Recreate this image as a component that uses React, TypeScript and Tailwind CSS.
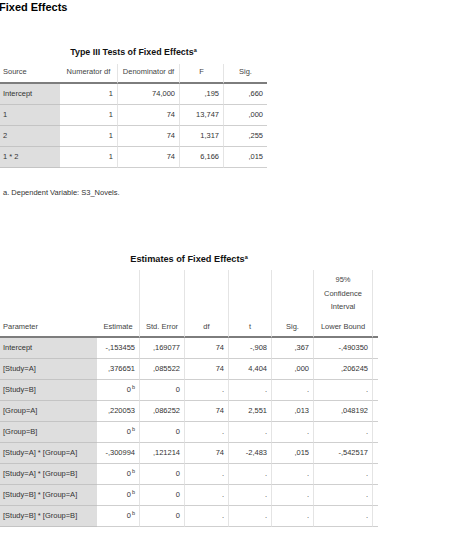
import React from "react"

const font = { fontFamily: '"Liberation Sans", Arial, sans-serif' }

type Cell = { v: string; sup?: string }

const testsCols = [60, 58, 62, 44, 43]
const testsHead = ["Source", "Numerator df", "Denominator df", "F", "Sig."]
const testsRows: string[][] = [
  ["Intercept", "1", "74,000", ",195", ",660"],
  ["1", "1", "74", "13,747", ",000"],
  ["2", "1", "74", "1,317", ",255"],
  ["1 * 2", "1", "74", "6,166", ",015"],
]

const estCols = [97, 43, 45, 44, 43, 42, 59, 5]
const estHead = ["Parameter", "Estimate", "Std. Error", "df", "t", "Sig."]
const estRows: Cell[][] = [
  [{ v: "Intercept" }, { v: "-,153455" }, { v: ",169077" }, { v: "74" }, { v: "-,908" }, { v: ",367" }, { v: "-,490350" }],
  [{ v: "[Study=A]" }, { v: ",376651" }, { v: ",085522" }, { v: "74" }, { v: "4,404" }, { v: ",000" }, { v: ",206245" }],
  [{ v: "[Study=B]" }, { v: "0", sup: "b" }, { v: "0" }, { v: "." }, { v: "." }, { v: "." }, { v: "." }],
  [{ v: "[Group=A]" }, { v: ",220053" }, { v: ",086252" }, { v: "74" }, { v: "2,551" }, { v: ",013" }, { v: ",048192" }],
  [{ v: "[Group=B]" }, { v: "0", sup: "b" }, { v: "0" }, { v: "." }, { v: "." }, { v: "." }, { v: "." }],
  [{ v: "[Study=A] * [Group=A]" }, { v: "-,300994" }, { v: ",121214" }, { v: "74" }, { v: "-2,483" }, { v: ",015" }, { v: "-,542517" }],
  [{ v: "[Study=A] * [Group=B]" }, { v: "0", sup: "b" }, { v: "0" }, { v: "." }, { v: "." }, { v: "." }, { v: "." }],
  [{ v: "[Study=B] * [Group=A]" }, { v: "0", sup: "b" }, { v: "0" }, { v: "." }, { v: "." }, { v: "." }, { v: "." }],
  [{ v: "[Study=B] * [Group=B]" }, { v: "0", sup: "b" }, { v: "0" }, { v: "." }, { v: "." }, { v: "." }, { v: "." }],
]

function TestsTable() {
  return (
    <div className="w-[267px]">
      <div className="h-[12px] text-center text-[8.9px] font-bold leading-[12px] text-[#111]">
        Type III Tests of Fixed Effects<sup className="text-[5.5px]">a</sup>
      </div>
      <div className="mt-[6px] flex">
        {testsHead.map((h, i) => (
          <div
            key={h}
            style={{ width: testsCols[i] }}
            className={`flex h-[20px] items-end border-b-2 border-[#7d7d7d] pb-[5px] leading-[10px] text-[#444] ${
              i === 0 ? "justify-start pl-[3px]" : "justify-center"
            } ${i > 0 && i < 4 ? "border-r border-r-[#e4e4e4]" : ""}`}
          >
            {h}
          </div>
        ))}
      </div>
      {testsRows.map((r, ri) => (
        <div key={ri} className="flex">
          {r.map((c, i) => (
            <div
              key={i}
              style={{ width: testsCols[i] }}
              className={`flex h-[21px] items-center border-b ${
                i === 0 ? "border-[#c4c4c4] bg-[#dedede] pl-[3px]" : "justify-end border-[#cfcfcf] pr-[4px]"
              } ${i > 0 && i < 4 ? "border-r border-r-[#e4e4e4]" : ""}`}
            >
              {c}
            </div>
          ))}
        </div>
      ))}
    </div>
  )
}

function EstimatesTable() {
  return (
    <div className="w-[378px]">
      <div className="h-[12px] text-center text-[9.2px] font-bold leading-[12px] text-[#111]">
        Estimates of Fixed Effects<sup className="text-[5.5px]">a</sup>
      </div>
      <div className="mt-[5px] flex text-[#444]">
        {estHead.map((h, i) => (
          <div
            key={h}
            style={{ width: estCols[i] }}
            className={`flex h-[68px] items-end border-b-2 border-[#7d7d7d] pb-[4px] leading-[10px] ${
              i === 0 ? "justify-start pl-[3px]" : "justify-center border-r border-r-[#e4e4e4]"
            }`}
          >
            {h}
          </div>
        ))}
        <div className="flex h-[68px] w-[59px] flex-col items-center justify-between border-r border-b-2 border-[#7d7d7d] border-r-[#e4e4e4] pt-[3px] pb-[4px] text-center">
          <div className="leading-[13.5px]">
            95%
            <br />
            Confidence
            <br />
            Interval
          </div>
          <div className="leading-[10px]">Lower Bound</div>
        </div>
        <div className="h-[68px] w-[5px] border-b-2 border-[#7d7d7d]" />
      </div>
      {estRows.map((r, ri) => (
        <div key={ri} className="flex">
          {r.map((c, i) => (
            <div
              key={i}
              style={{ width: estCols[i] }}
              className={`flex h-[21px] items-center whitespace-nowrap border-b ${
                i === 0
                  ? "border-[#c4c4c4] bg-[#dedede] pl-[3px]"
                  : "justify-end border-[#cfcfcf] border-r border-r-[#e4e4e4] pr-[4px]"
              }`}
            >
              {c.v}
              {c.sup && <sup className="ml-[1px] text-[5.5px]">{c.sup}</sup>}
            </div>
          ))}
          <div className="h-[21px] w-[5px] border-b border-[#cfcfcf]" />
        </div>
      ))}
    </div>
  )
}

export default function App() {
  return (
    <div style={font} className="h-[546px] w-[474px] overflow-hidden bg-white text-[7.5px] text-[#333]">
      <h2 className="-ml-[1px] h-[14px] text-[11px] font-bold leading-[14px] text-black">Fixed Effects</h2>
      <div className="mt-[32px]">
        <TestsTable />
      </div>
      <div className="mt-[20px] pl-[3px] leading-[10px]">a. Dependent Variable: S3_Novels.</div>
      <div className="mt-[55px]">
        <EstimatesTable />
      </div>
    </div>
  )
}
